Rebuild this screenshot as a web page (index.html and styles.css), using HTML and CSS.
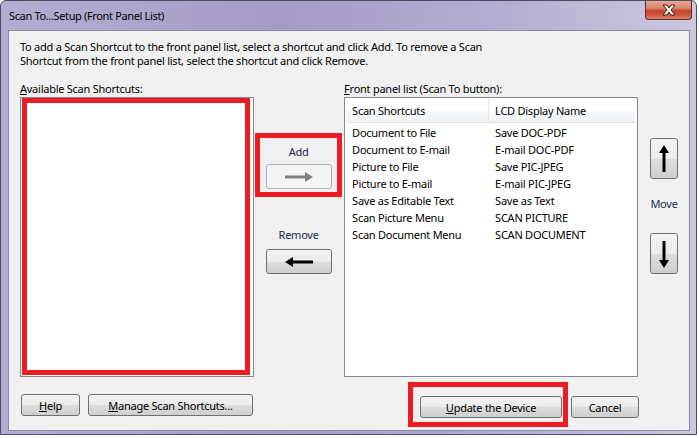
FILE: index.html
```html
<!DOCTYPE html>
<html lang="en">
<head>
    <meta charset="UTF-8">
    <title>Scan To...Setup (Front Panel List)</title>
    <link rel="stylesheet" href="styles.css">
</head>
<body>
    <div class="window">
        <div class="titlebar">
            <span class="title">Scan To...Setup (Front Panel List)</span>
            <div class="close-btn">
                <svg width="18" height="12" viewBox="0 0 18 12">
                    <path d="M3 1 L7 1 L9 4 L11 1 L15 1 L11 6 L15 11 L11 11 L9 8 L7 11 L3 11 L7 6 Z" fill="#fff" stroke="#4a1a14" stroke-width="1"/>
                </svg>
            </div>
        </div>
        <div class="content">
            <p class="intro">To add a Scan Shortcut to the front panel list, select a shortcut and click Add. To remove a Scan<br>Shortcut from the front panel list, select the shortcut and click Remove.</p>

            <div class="main-row">
                <div class="left-col">
                    <div class="label"><u>A</u>vailable Scan Shortcuts:</div>
                    <div class="listbox left-list">
                        <div class="red-mark"></div>
                    </div>
                </div>

                <div class="mid-col">
                    <div class="add-box">
                        <div class="side-label">Add</div>
                        <div class="btn arrow-btn disabled">
                            <svg width="32" height="12" viewBox="0 0 32 12">
                                <path d="M2 4.5 H22 V1 L30 6 L22 11 V7.5 H2 Z" fill="#808080"/>
                            </svg>
                        </div>
                    </div>
                    <div class="side-label remove-label">Remove</div>
                    <div class="btn arrow-btn">
                        <svg width="32" height="12" viewBox="0 0 32 12">
                            <path d="M30 4.5 H10 V1 L2 6 L10 11 V7.5 H30 Z" fill="#000"/>
                        </svg>
                    </div>
                </div>

                <div class="right-col">
                    <div class="label"><u>F</u>ront panel list (Scan To button):</div>
                    <div class="listbox right-list">
                        <div class="list-head">
                            <div class="col-a">Scan Shortcuts</div>
                            <div class="col-b">LCD Display Name</div>
                        </div>
                        <div class="list-body">
                            <div class="row"><span class="col-a">Document to File</span><span class="col-b">Save DOC-PDF</span></div>
                            <div class="row"><span class="col-a">Document to E-mail</span><span class="col-b">E-mail DOC-PDF</span></div>
                            <div class="row"><span class="col-a">Picture to File</span><span class="col-b">Save PIC-JPEG</span></div>
                            <div class="row"><span class="col-a">Picture to E-mail</span><span class="col-b">E-mail PIC-JPEG</span></div>
                            <div class="row"><span class="col-a">Save as Editable Text</span><span class="col-b">Save as Text</span></div>
                            <div class="row"><span class="col-a">Scan Picture Menu</span><span class="col-b">SCAN PICTURE</span></div>
                            <div class="row"><span class="col-a">Scan Document Menu</span><span class="col-b">SCAN DOCUMENT</span></div>
                        </div>
                    </div>
                </div>

                <div class="move-col">
                    <div class="btn move-btn">
                        <svg width="12" height="30" viewBox="0 0 12 30">
                            <path d="M4.5 28 V9 H1 L6 1 L11 9 H7.5 V28 Z" fill="#000"/>
                        </svg>
                    </div>
                    <div class="side-label move-label">Move</div>
                    <div class="btn move-btn">
                        <svg width="12" height="30" viewBox="0 0 12 30">
                            <path d="M4.5 2 V21 H1 L6 29 L11 21 H7.5 V2 Z" fill="#000"/>
                        </svg>
                    </div>
                </div>
            </div>

            <div class="bottom-row">
                <div class="btn help-btn"><u>H</u>elp</div>
                <div class="btn manage-btn"><u>M</u>anage Scan Shortcuts...</div>
                <div class="update-box">
                    <div class="btn update-btn"><u>U</u>pdate the Device</div>
                </div>
                <div class="btn cancel-btn">Cancel</div>
            </div>
        </div>
    </div>
</body>
</html>
```

FILE: styles.css
```css
body {
    margin: 0;
    background: #fff;
    font-family: "Noto Sans", "Open Sans", sans-serif;
    font-size: 11px;
    letter-spacing: -0.25px;
    color: #000;
}
.window {
    width: 697px;
    height: 435px;
    padding: 0 6px 5px 7px;
    box-sizing: border-box;
    border: 1px solid #4e4a63;
    border-radius: 6px 6px 0 0;
    background: linear-gradient(90deg, #b4add2 0%, #a59cc6 40%, #b3acd2 70%, #cbc7df 100%);
}
.titlebar {
    height: 29px;
    display: flex;
    justify-content: space-between;
    align-items: flex-start;
    margin-right: -2px;
}
.title {
    font-size: 11px;
    letter-spacing: -0.35px;
    margin-top: 7px;
    margin-left: 1px;
}
.close-btn {
    width: 45px;
    height: 18px;
    border: 1px solid #5c2a24;
    border-top: none;
    border-radius: 0 0 4px 4px;
    background: linear-gradient(#e9a996 0%, #d9826c 40%, #c3432c 55%, #cf5a40 80%, #e0876f 100%);
    display: flex;
    align-items: center;
    justify-content: center;
}
.content {
    height: 401px;
    box-sizing: border-box;
    border: 1px solid #8b88a8;
    background: #f0f0f0;
    padding: 9px 11px 0 11px;
}
.intro {
    margin: 0;
    line-height: 14px;
}
.main-row {
    display: flex;
    margin-top: 14px;
}
.label {
    line-height: 14px;
    margin-bottom: 1px;
}
.listbox {
    border: 1px solid #828790;
    background: #fff;
    height: 280px;
    box-sizing: border-box;
}
.left-col {
    width: 235px;
}
.left-list {
    padding: 0 3px 1px 1px;
}
.red-mark {
    height: 100%;
    box-sizing: border-box;
    border: 5px solid #ed1c24;
}
.mid-col {
    width: 87px;
    margin-left: 1px;
    padding-top: 51px;
    display: flex;
    flex-direction: column;
    align-items: center;
}
.side-label {
    color: #1c2a4f;
    line-height: 14px;
    text-align: center;
}
.add-box {
    width: 87px;
    box-sizing: border-box;
    border: 5px solid #ed1c24;
    padding: 7px 0 3px 0;
    display: flex;
    flex-direction: column;
    align-items: center;
}
.add-box .side-label {
    margin-bottom: 5px;
}
.remove-label {
    margin-top: 31px;
    margin-bottom: 7px;
}
.btn {
    box-sizing: border-box;
    border: 1px solid #707070;
    border-radius: 3px;
    background: linear-gradient(#f2f2f2 0%, #ebebeb 50%, #dddddd 51%, #cfcfcf 100%);
    display: flex;
    align-items: center;
    justify-content: center;
}
.btn.disabled {
    border-color: #adb2b5;
    background: #f4f4f4;
}
.arrow-btn {
    width: 66px;
    height: 25px;
}
.right-col {
    width: 295px;
    margin-left: 2px;
}
.right-list {
    padding: 1px;
}
.list-head {
    display: flex;
    height: 23px;
    align-items: center;
    background: linear-gradient(#ffffff 0%, #ffffff 50%, #f7f8f9 51%, #f1f2f4 100%);
    border-bottom: 1px solid #e3e5e8;
    margin-right: 1px;
}
.list-head .col-a {
    width: 136px;
    padding-left: 6px;
    border-right: 1px solid #e3e5e8;
    height: 23px;
    line-height: 23px;
}
.list-head .col-b {
    padding-left: 6px;
}
.list-body {
    padding-top: 1px;
}
.row {
    display: flex;
    height: 17px;
    line-height: 17px;
}
.row .col-a {
    width: 137px;
    padding-left: 6px;
}
.row .col-b {
    padding-left: 6px;
}
.move-col {
    width: 28px;
    margin-left: 12px;
    padding-top: 56px;
    display: flex;
    flex-direction: column;
    align-items: center;
}
.move-btn {
    width: 28px;
    height: 41px;
}
.move-label {
    margin: 18px 0 22px 0;
}
.bottom-row {
    display: flex;
    align-items: flex-end;
    margin-top: 5px;
}
.help-btn, .manage-btn, .update-btn, .cancel-btn {
    height: 22px;
}
.help-btn {
    width: 59px;
    margin-left: 1px;
    margin-bottom: 11px;
}
.manage-btn {
    width: 165px;
    margin-left: 8px;
    margin-bottom: 11px;
}
.update-box {
    width: 160px;
    height: 45px;
    box-sizing: border-box;
    border: 5px solid #ed1c24;
    margin-left: 155px;
    padding: 0 1px 4px 7px;
    display: flex;
    align-items: flex-end;
}
.update-btn {
    width: 142px;
}
.cancel-btn {
    width: 68px;
    margin-left: 3px;
    margin-bottom: 9px;
}
```
